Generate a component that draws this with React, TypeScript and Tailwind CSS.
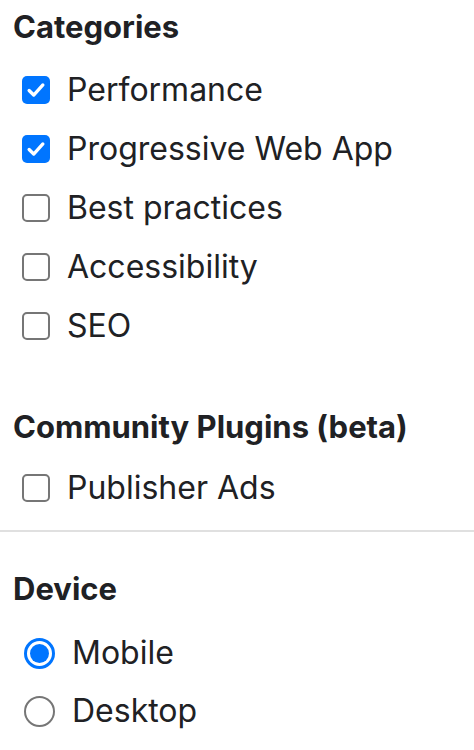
const categories = [
  { label: "Performance", checked: true },
  { label: "Progressive Web App", checked: true },
  { label: "Best practices", checked: false },
  { label: "Accessibility", checked: false },
  { label: "SEO", checked: false },
];

const Checkbox = ({ checked }: { checked: boolean }) =>
  checked ? (
    <span className="flex h-[28px] w-[28px] shrink-0 items-center justify-center rounded-[5px] bg-[#0075ff]">
      <svg viewBox="0 0 24 24" className="h-[22px] w-[22px]" fill="none">
        <path d="M4.5 12.5l5 5 10-11" stroke="#fff" strokeWidth="3.6" strokeLinecap="round" strokeLinejoin="round" />
      </svg>
    </span>
  ) : (
    <span className="h-[28px] w-[28px] shrink-0 rounded-[5px] border-2 border-[#767676] bg-white" />
  );

const Radio = ({ checked }: { checked: boolean }) =>
  checked ? (
    <span className="flex h-[31px] w-[31px] shrink-0 items-center justify-center rounded-full border-[3px] border-[#0075ff] bg-white">
      <span className="h-[19px] w-[19px] rounded-full bg-[#0075ff]" />
    </span>
  ) : (
    <span className="h-[31px] w-[31px] shrink-0 rounded-full border-2 border-[#767676] bg-white" />
  );

const Heading = ({ children, className = "" }: { children: string; className?: string }) => (
  <div className={`flex h-[53px] items-center pl-[13px] text-[31px] font-bold text-[#202124] ${className}`}>
    {children}
  </div>
);

const CheckRow = ({ label, checked }: { label: string; checked: boolean }) => (
  <label className="flex h-[59px] items-center gap-[17px] pl-[22px] text-[32px] text-[#202124]">
    <Checkbox checked={checked} />
    <span>{label}</span>
  </label>
);

const RadioRow = ({ label, checked }: { label: string; checked: boolean }) => (
  <label className="flex h-[58px] items-center gap-[17px] pl-[24px] text-[32px] text-[#202124]">
    <Radio checked={checked} />
    <span>{label}</span>
  </label>
);

export default function App() {
  return (
    <div className="h-[750px] w-[474px] overflow-hidden bg-white font-['Inter',sans-serif] leading-none">
      <Heading>Categories</Heading>
      <div className="pt-[7px]">
        {categories.map((c) => (
          <CheckRow key={c.label} label={c.label} checked={c.checked} />
        ))}
      </div>

      <Heading className="mt-[45px]">Community Plugins (beta)</Heading>
      <div className="pt-[5px]">
        <CheckRow label="Publisher Ads" checked={false} />
      </div>

      <div className="mt-[13px] h-[2px] bg-[#e0e0e0]" />

      <Heading className="mt-[30px]">Device</Heading>
      <div className="mt-[9px]">
        <RadioRow label="Mobile" checked />
        <RadioRow label="Desktop" checked={false} />
      </div>
    </div>
  );
}
